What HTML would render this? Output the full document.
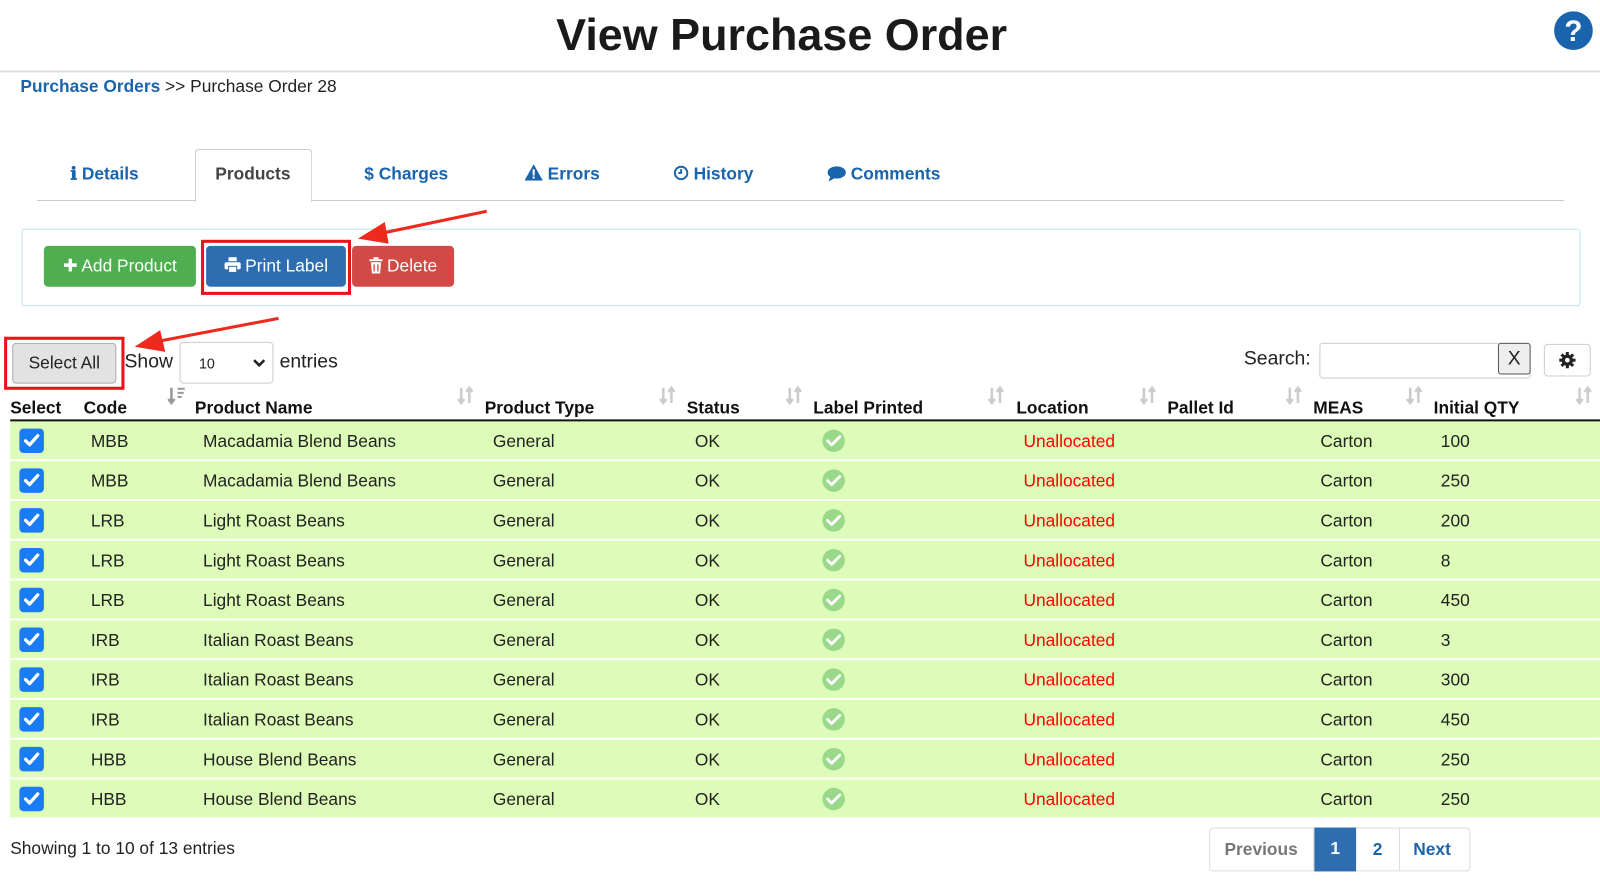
<!DOCTYPE html>
<html><head><meta charset="utf-8">
<style>
*{box-sizing:border-box;margin:0;padding:0}
body{width:1600px;height:881px;background:#fff;font-family:"Liberation Sans",Arial,sans-serif;color:#222;overflow:hidden}
#w{position:absolute;left:0;top:0;width:1568px;height:864px;transform:scale(1.0204);transform-origin:0 0}
.a{position:absolute;white-space:nowrap}
.tab{position:absolute;top:161px;font-size:17px;font-weight:bold;color:#1a64ad}
.btn{position:absolute;top:241px;height:40px;border-radius:4px;color:#fff;font-size:17px;line-height:40px;text-align:center}
.th{position:absolute;top:390px;font-size:17px;font-weight:bold;color:#111}
.si{position:absolute;top:380px}
.row{position:absolute;left:10px;width:1558px;height:37px;background:#dcfcb8}
.row span{position:absolute;top:10px;font-size:17px;color:#222}
</style></head><body><div id="w">
<div class="a" style="left:0;top:10px;width:1532px;text-align:center;font-size:44px;font-weight:bold;color:#1a1a1a">View Purchase Order</div>
<svg class="a" style="left:1523px;top:11px" width="38" height="38" viewBox="0 0 38 38"><circle cx="19" cy="19" r="19" fill="#1a64ad"/><text x="19" y="29" text-anchor="middle" font-family="Liberation Sans" font-weight="bold" font-size="29" fill="#fff">?</text></svg>
<div class="a" style="left:0;top:69px;width:1568px;height:2px;background:#ddd"></div>
<div class="a" style="left:20px;top:75px;font-size:17px"><b style="color:#1a64ad">Purchase Orders</b> &gt;&gt; Purchase Order 28</div>

<div class="a" style="left:36px;top:196px;width:1497px;height:1px;background:#ccc"></div>
<div class="a" style="left:191px;top:146px;width:115px;height:52px;border:1px solid #ccc;border-bottom:none;border-radius:4px 4px 0 0;background:#fff"></div>
<div class="tab" style="left:69px">ℹ Details</div>
<div class="tab" style="left:211px;color:#444">Products</div>
<div class="tab" style="left:357px">$ Charges</div>
<div class="tab" style="left:514px"><svg width="18" height="16" viewBox="0 0 18 16" style="vertical-align:-1px"><path d="M9 0L18 16H0Z" fill="#1a64ad"/><rect x="8" y="5" width="2" height="6" fill="#fff"/><rect x="8" y="12" width="2" height="2" fill="#fff"/></svg> Errors</div>
<div class="tab" style="left:660px"><svg width="15" height="15" viewBox="0 0 16 16" style="vertical-align:-1px"><circle cx="8" cy="8" r="6.5" fill="none" stroke="#1a64ad" stroke-width="2"/><path d="M8 4V8H5" fill="none" stroke="#1a64ad" stroke-width="2"/></svg> History</div>
<div class="tab" style="left:811px"><svg width="18" height="16" viewBox="0 0 18 16" style="vertical-align:-2px"><ellipse cx="9" cy="7" rx="9" ry="6" fill="#1a64ad"/><path d="M3 10L1 16L8 12Z" fill="#1a64ad"/></svg> Comments</div>

<div class="a" style="left:21px;top:224px;width:1528px;height:76px;border:1px solid #b9e4ec;border-radius:3px"></div>
<div class="btn" style="left:43px;width:149px;background:#4fae4f">✚ Add Product</div>
<div class="btn" style="left:202px;width:137px;background:#2e6eb0"><svg width="16" height="15" viewBox="0 0 16 15" style="vertical-align:-1px"><rect x="4" y="0" width="8" height="4" fill="#fff"/><rect x="0" y="5" width="16" height="7" rx="2" fill="#fff"/><rect x="4" y="9" width="8" height="6" fill="#fff" stroke="#2e6eb0"/></svg> Print Label</div>
<div class="btn" style="left:345px;width:100px;background:#d24a46"><svg width="13" height="16" viewBox="0 0 13 16" style="vertical-align:-2px"><rect x="0" y="2" width="13" height="2" fill="#fff"/><rect x="4" y="0" width="5" height="2" fill="#fff"/><path d="M1.5 5H11.5L10.5 16H2.5Z" fill="#fff"/><rect x="4" y="7" width="1.3" height="7" fill="#d24a46"/><rect x="7.7" y="7" width="1.3" height="7" fill="#d24a46"/></svg> Delete</div>
<div class="a" style="left:197px;top:235px;width:147px;height:54px;border:3px solid #e8141a"></div>

<svg class="a" style="left:0;top:0" width="600" height="360"><g stroke="#ee2a1e" stroke-width="3" fill="#ee2a1e"><line x1="477" y1="207" x2="372" y2="229"/><path d="M355 233L376 220L379 237Z"/><line x1="273" y1="312" x2="152" y2="335"/><path d="M136 339L156 326L160 343Z"/></g></svg>

<div class="a" style="left:12px;top:336px;width:102px;height:40px;background:#e2e2e2;border:1px solid #aaa;border-radius:4px;font-size:17px;line-height:38px;text-align:center">Select All</div>
<div class="a" style="left:4px;top:330px;width:118px;height:52px;border:3px solid #e8141a"></div>
<div class="a" style="left:122px;top:344px;font-size:19px">Show</div>
<div class="a" style="left:176px;top:335px;width:92px;height:41px;border:1px solid #ccc;border-radius:4px;font-size:14px;line-height:40px;padding-left:18px">10<svg width="14" height="10" viewBox="0 0 14 10" style="position:absolute;right:6px;top:15px"><path d="M2 2L7 7L12 2" fill="none" stroke="#222" stroke-width="2.5"/></svg></div>
<div class="a" style="left:274px;top:344px;font-size:19px">entries</div>
<div class="a" style="left:1219px;top:341px;font-size:19px">Search:</div>
<div class="a" style="left:1293px;top:336px;width:207px;height:35px;border:1px solid #ccc;border-radius:3px"></div>
<div class="a" style="left:1468px;top:336px;width:32px;height:31px;border:1px solid #555;border-radius:3px;background:#eee;font-size:19px;line-height:29px;text-align:center">X</div>
<div class="a" style="left:1513px;top:337px;width:46px;height:32px;border:1px solid #ccc;border-radius:4px"><svg width="16" height="16" viewBox="0 0 16 16" style="position:absolute;left:14px;top:7px"><g fill="#222"><circle cx="8" cy="8" r="5.5"/><rect x="6.5" y="0" width="3" height="16"/><rect x="0" y="6.5" width="16" height="3"/><rect x="6.5" y="0" width="3" height="16" transform="rotate(45 8 8)"/><rect x="6.5" y="0" width="3" height="16" transform="rotate(-45 8 8)"/></g><circle cx="8" cy="8" r="2.3" fill="#fff"/></svg></div>

<div class="th" style="left:10px">Select</div>
<div class="th" style="left:82px">Code</div>
<div class="th" style="left:191px">Product Name</div>
<div class="th" style="left:475px">Product Type</div>
<div class="th" style="left:673px">Status</div>
<div class="th" style="left:797px">Label Printed</div>
<div class="th" style="left:996px">Location</div>
<div class="th" style="left:1144px">Pallet Id</div>
<div class="th" style="left:1287px">MEAS</div>
<div class="th" style="left:1405px">Initial QTY</div>
<svg class="a" style="left:0;top:378px" width="1568" height="24">
<defs><g id="s"><path d="M3 2V17M0 13L3 17L6 13" fill="none" stroke="#ccc" stroke-width="2.5"/><path d="M11 17V2M8 6L11 2L14 6" fill="none" stroke="#ccc" stroke-width="2.5"/></g></defs>
<g><path d="M168 2V17M165 13L168 17L171 13" fill="none" stroke="#999" stroke-width="2.5"/><path d="M174 3H181M174 7H180M174 11H178" stroke="#999" stroke-width="2"/></g>
<use href="#s" x="449"/><use href="#s" x="647"/><use href="#s" x="771"/><use href="#s" x="969"/><use href="#s" x="1118"/><use href="#s" x="1261"/><use href="#s" x="1379"/><use href="#s" x="1545"/>
</svg>
<div class="a" style="left:10px;top:411px;width:1558px;height:2px;background:#111"></div>

<div class="row" style="top:413px"><span style="left:79px">MBB</span><span style="left:189px">Macadamia Blend Beans</span><span style="left:473px">General</span><span style="left:671px">OK</span><span style="left:993px;color:#f00">Unallocated</span><span style="left:1284px">Carton</span><span style="left:1402px">100</span></div>
<div class="row" style="top:452px"><span style="left:79px">MBB</span><span style="left:189px">Macadamia Blend Beans</span><span style="left:473px">General</span><span style="left:671px">OK</span><span style="left:993px;color:#f00">Unallocated</span><span style="left:1284px">Carton</span><span style="left:1402px">250</span></div>
<div class="row" style="top:491px"><span style="left:79px">LRB</span><span style="left:189px">Light Roast Beans</span><span style="left:473px">General</span><span style="left:671px">OK</span><span style="left:993px;color:#f00">Unallocated</span><span style="left:1284px">Carton</span><span style="left:1402px">200</span></div>
<div class="row" style="top:530px"><span style="left:79px">LRB</span><span style="left:189px">Light Roast Beans</span><span style="left:473px">General</span><span style="left:671px">OK</span><span style="left:993px;color:#f00">Unallocated</span><span style="left:1284px">Carton</span><span style="left:1402px">8</span></div>
<div class="row" style="top:569px"><span style="left:79px">LRB</span><span style="left:189px">Light Roast Beans</span><span style="left:473px">General</span><span style="left:671px">OK</span><span style="left:993px;color:#f00">Unallocated</span><span style="left:1284px">Carton</span><span style="left:1402px">450</span></div>
<div class="row" style="top:608px"><span style="left:79px">IRB</span><span style="left:189px">Italian Roast Beans</span><span style="left:473px">General</span><span style="left:671px">OK</span><span style="left:993px;color:#f00">Unallocated</span><span style="left:1284px">Carton</span><span style="left:1402px">3</span></div>
<div class="row" style="top:647px"><span style="left:79px">IRB</span><span style="left:189px">Italian Roast Beans</span><span style="left:473px">General</span><span style="left:671px">OK</span><span style="left:993px;color:#f00">Unallocated</span><span style="left:1284px">Carton</span><span style="left:1402px">300</span></div>
<div class="row" style="top:686px"><span style="left:79px">IRB</span><span style="left:189px">Italian Roast Beans</span><span style="left:473px">General</span><span style="left:671px">OK</span><span style="left:993px;color:#f00">Unallocated</span><span style="left:1284px">Carton</span><span style="left:1402px">450</span></div>
<div class="row" style="top:725px"><span style="left:79px">HBB</span><span style="left:189px">House Blend Beans</span><span style="left:473px">General</span><span style="left:671px">OK</span><span style="left:993px;color:#f00">Unallocated</span><span style="left:1284px">Carton</span><span style="left:1402px">250</span></div>
<div class="row" style="top:764px"><span style="left:79px">HBB</span><span style="left:189px">House Blend Beans</span><span style="left:473px">General</span><span style="left:671px">OK</span><span style="left:993px;color:#f00">Unallocated</span><span style="left:1284px">Carton</span><span style="left:1402px">250</span></div>
<svg class="a" style="left:0;top:413px" width="900" height="390">
<defs><g id="ck"><rect x="19" y="7" width="24" height="24" rx="4" fill="#1a7cf5"/><path d="M25 19L29 23L37 14" fill="none" stroke="#fff" stroke-width="3.2" stroke-linecap="round" stroke-linejoin="round"/></g>
<g id="ok"><circle cx="817" cy="19" r="11" fill="#9ad88a"/><path d="M811 19L815 23L823 15" fill="none" stroke="#fff" stroke-width="2.8" stroke-linecap="round" stroke-linejoin="round"/></g></defs>
<use href="#ck"/><use href="#ok"/>
<use href="#ck" y="39"/><use href="#ok" y="39"/>
<use href="#ck" y="78"/><use href="#ok" y="78"/>
<use href="#ck" y="117"/><use href="#ok" y="117"/>
<use href="#ck" y="156"/><use href="#ok" y="156"/>
<use href="#ck" y="195"/><use href="#ok" y="195"/>
<use href="#ck" y="234"/><use href="#ok" y="234"/>
<use href="#ck" y="273"/><use href="#ok" y="273"/>
<use href="#ck" y="312"/><use href="#ok" y="312"/>
<use href="#ck" y="351"/><use href="#ok" y="351"/>
</svg>

<div class="a" style="left:10px;top:822px;font-size:17px">Showing 1 to 10 of 13 entries</div>
<div class="a" style="left:1185px;top:811px;width:256px;height:43px;border:1px solid #ddd;border-radius:4px;font-size:17px;font-weight:bold;line-height:41px">
<span class="a" style="left:14px;color:#777">Previous</span>
<span class="a" style="left:102px;top:-1px;width:41px;height:43px;background:#2e6eb0;color:#fff;text-align:center">1</span>
<span class="a" style="left:143px;width:43px;text-align:center;color:#1a64ad;border-right:1px solid #ddd">2</span>
<span class="a" style="left:199px;color:#1a64ad">Next</span>
<span class="a" style="left:101px;top:0;width:1px;height:41px;background:#ddd"></span>
</div>
</div></body></html>
